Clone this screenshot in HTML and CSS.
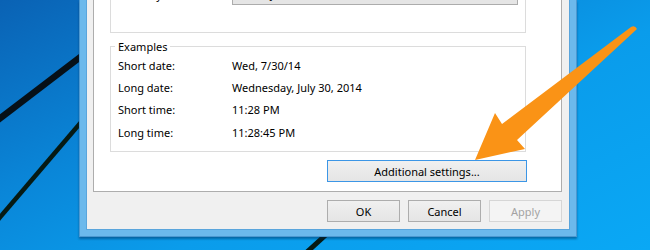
FILE: index.html
```html
<!DOCTYPE html>
<html>
<head>
<meta charset="utf-8">
<link rel="stylesheet" href="styles.css">
</head>
<body>
<svg class="wallpaper" viewBox="0 0 650 250" width="650" height="250">
  <line x1="-10" y1="126" x2="100" y2="42" stroke="#061018" stroke-width="6.5"/>
  <line x1="-10" y1="229" x2="100" y2="100" stroke="#061a14" stroke-width="4.5"/>
  <line x1="296" y1="262" x2="340" y2="222" stroke="#061a14" stroke-width="5"/>
</svg>
<div class="window">
  <div class="client">
    <div class="panel">
      <div class="group group-top">
        <div class="row row-clipped">
          <span class="lbl">First day of week:</span>
          <span class="combo">Sunday</span>
        </div>
      </div>
      <div class="group group-examples">
        <div class="legend">Examples</div>
        <div class="row"><span class="lbl">Short date:</span><span class="val">Wed, 7/30/14</span></div>
        <div class="row"><span class="lbl">Long date:</span><span class="val">Wednesday, July 30, 2014</span></div>
        <div class="row"><span class="lbl">Short time:</span><span class="val">11:28 PM</span></div>
        <div class="row"><span class="lbl">Long time:</span><span class="val">11:28:45 PM</span></div>
      </div>
      <div class="panel-actions">
        <button class="btn btn-wide btn-focus">Additional settings...</button>
      </div>
    </div>
    <div class="actions">
      <button class="btn">OK</button>
      <button class="btn">Cancel</button>
      <button class="btn" disabled>Apply</button>
    </div>
  </div>
</div>
<svg class="arrow" viewBox="0 0 650 250" width="650" height="250">
  <path d="M475 160 L495 113 L502 124 L631 27 Q635 25 637 29 L517 140 L525 149 Z" fill="#fa9316"/>
</svg>
</body>
</html>
```
FILE: styles.css
```css
* { box-sizing: border-box; }
html, body { margin: 0; padding: 0; }
body {
  width: 650px;
  height: 250px;
  overflow: hidden;
  position: relative;
  font-family: "Noto Sans", "Open Sans", sans-serif;
  font-size: 11px;
  color: #000;
  background: linear-gradient(155deg, #0a62b4 0%, #0a86d8 35%, #0a9ceb 60%, #0aa8f5 100%);
}
.wallpaper {
  position: absolute;
  left: 0;
  top: 0;
  z-index: 0;
}
.arrow {
  position: absolute;
  left: 0;
  top: 0;
  z-index: 5;
  pointer-events: none;
}
.window {
  position: relative;
  z-index: 1;
  margin-left: 79px;
  width: 498px;
  border: 1px solid #4d98d0;
  border-top: none;
  padding: 0 6px 6px 6px;
  background: #6cb9ec;
  box-shadow: 0 2px 2px rgba(0, 40, 80, 0.45);
}
.client {
  background: #f0f0f0;
  border: 1px solid #5aa5dc;
  border-top: none;
  padding: 0 7px 7px 6px;
}
.panel {
  background: #fff;
  border: 1px solid #adadad;
  border-top: none;
  padding: 0 0 9px 0;
}
.group {
  border: 1px solid #dcdcdc;
  margin: 0 35px 0 16px;
  padding-left: 7px;
}
.group-top {
  border-top: none;
  height: 33px;
  overflow: hidden;
}
.row {
  display: flex;
  align-items: center;
  height: 22px;
}
.group-examples .row {
  height: 22.33px;
}
.row-clipped {
  margin-top: -17px;
}
.lbl {
  width: 114px;
  flex: none;
}
.combo {
  width: 286px;
  height: 22px;
  line-height: 20px;
  padding-left: 4px;
  background: #e5e5e5;
  border: 1px solid #acacac;
}
.group-examples {
  margin-top: 13px;
  padding-bottom: 8px;
}
.legend {
  width: max-content;
  height: 14px;
  line-height: 14px;
  margin: -7px 0 0 -3px;
  padding: 0 3px;
  background: #fff;
}
.panel-actions {
  display: flex;
  justify-content: flex-end;
  margin: 8px 34px 0 0;
}
.btn {
  font-family: inherit;
  font-size: 11px;
  color: #000;
  width: 73px;
  height: 22px;
  padding: 0;
  border: 1px solid #adadad;
  background: linear-gradient(#f0f0f0, #e5e5e5);
}
.btn-wide { width: 200px; }
.btn-focus { border-color: #3c96e6; }
.btn:disabled {
  color: #a3a3a3;
  border-color: #d6d6d6;
  background: #f4f4f4;
}
.actions {
  display: flex;
  justify-content: flex-end;
  gap: 8px;
  margin-top: 8px;
}
```
